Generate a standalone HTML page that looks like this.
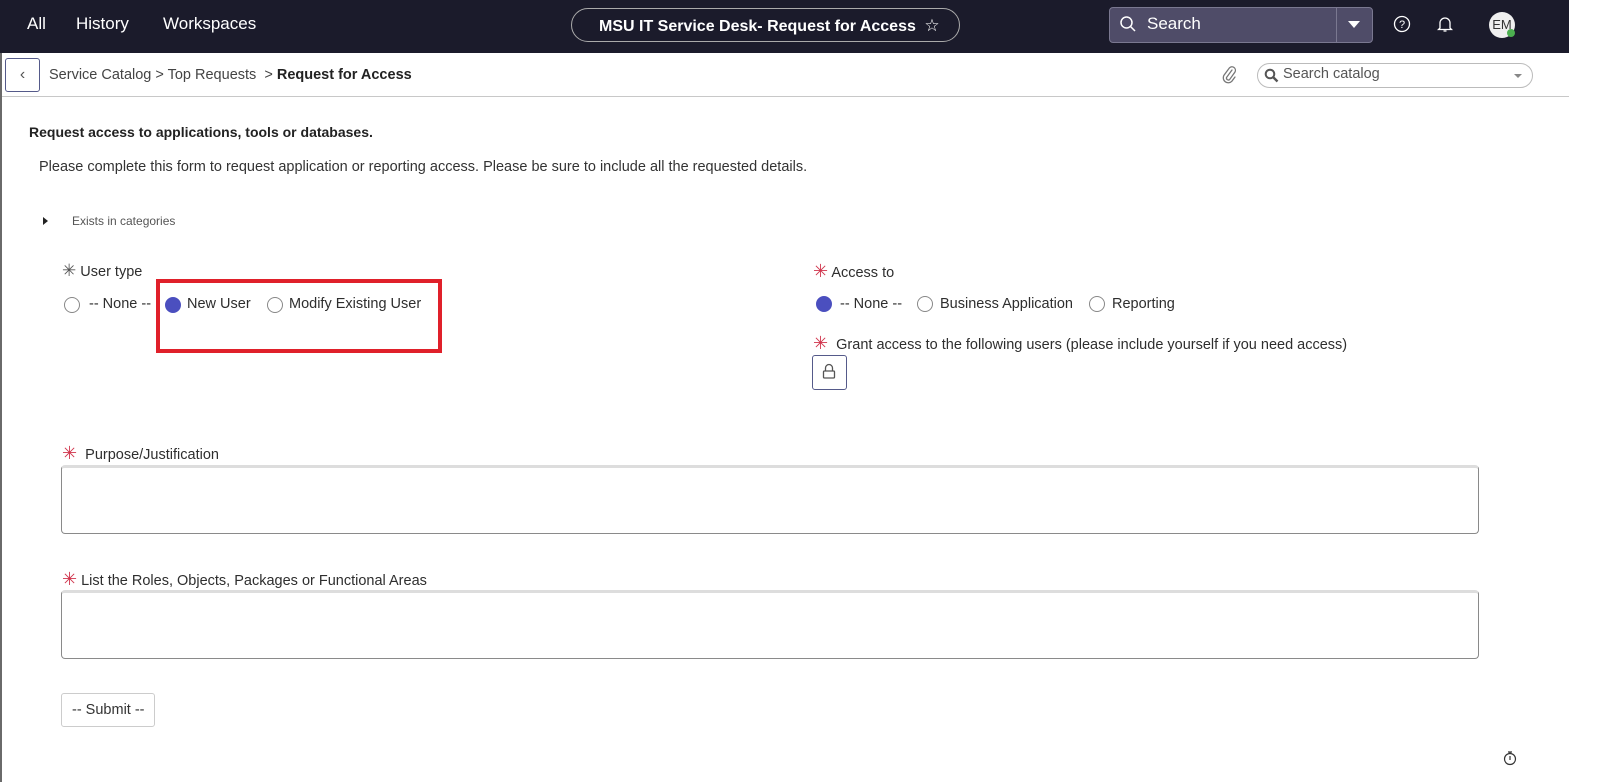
<!DOCTYPE html>
<html><head><meta charset="utf-8"><style>
*{box-sizing:border-box;margin:0;padding:0}
body{width:1600px;height:782px;background:#fff;font-family:"Liberation Sans",sans-serif;color:#2e2e2e;position:relative;overflow:hidden}
.a{position:absolute;white-space:nowrap}
.top{position:absolute;left:0;top:0;width:1569px;height:53px;background:#1b1b2b}
.nav{color:#fff;font-size:17px;top:14px}
.radio{position:absolute;width:16px;height:16px;border:1px solid #888;border-radius:50%;background:#fff}
.radio.on{background:#4b4fbf;border-color:#4b4fbf}
.lbl{font-size:14.5px;color:#2e2e2e}
.star{color:#d0344c;font-size:18px}
.ta{position:absolute;left:61px;width:1418px;border:1px solid #8a8a8a;border-radius:4px;border-top:3px solid #ddd}
</style></head><body>
<div style="position:absolute;left:0;top:0;width:2px;height:782px;background:#6a6a6a"></div>
<div class="top"></div>
<div class="a nav" style="left:27px">All</div>
<div class="a nav" style="left:76px">History</div>
<div class="a nav" style="left:163px">Workspaces</div>
<div class="a" style="left:571px;top:8px;width:389px;height:34px;border:1px solid #aaa;border-radius:17px;color:#fff;font-weight:bold;font-size:16px;padding:7px 0 0 27px">MSU IT Service Desk- Request for Access <span style="font-weight:normal;font-size:17px;margin-left:4px">☆</span></div>
<div class="a" style="left:1109px;top:7px;width:264px;height:36px;background:#4f4c68;border:1px solid #7a7890;border-radius:4px"></div>
<div class="a" style="left:1336px;top:7px;width:1px;height:36px;background:#7a7890"></div>
<svg class="a" style="left:1119px;top:15px" width="18" height="18" viewBox="0 0 18 18"><circle cx="7.5" cy="7.5" r="5.5" fill="none" stroke="#fff" stroke-width="1.5"/><path d="M11.5 11.5L16 16" stroke="#fff" stroke-width="1.5"/></svg>
<div class="a" style="left:1147px;top:14px;color:#fff;font-size:17px">Search</div>
<div class="a" style="left:1348px;top:21px;width:0;height:0;border-left:6px solid transparent;border-right:6px solid transparent;border-top:7px solid #fff"></div>
<svg class="a" style="left:1393px;top:15px" width="18" height="18"><circle cx="9" cy="9" r="7.5" fill="none" stroke="#fff" stroke-width="1.3"/><text x="9" y="13" font-size="11" fill="#fff" text-anchor="middle" font-family="Liberation Sans">?</text></svg>
<svg class="a" style="left:1437px;top:15px" width="16" height="18"><path d="M3 13V8a5 5 0 0110 0v5l1.5 1.5h-13z M6.5 16h3" fill="none" stroke="#fff" stroke-width="1.3"/></svg>
<div class="a" style="left:1489px;top:12px;width:26px;height:26px;border-radius:50%;background:#f0f0f0;color:#333;font-size:13px;text-align:center;line-height:26px">EM</div>
<div class="a" style="left:1507px;top:29px;width:8px;height:8px;border-radius:50%;background:#4caf50"></div>
<div class="a" style="left:5px;top:58px;width:35px;height:34px;border:1px solid #555a8a;border-radius:3px;color:#555;text-align:center;font-size:16px;line-height:32px">‹</div>
<div class="a" style="left:49px;top:67px;font-size:14.5px;color:#444">Service Catalog &gt; Top Requests &nbsp;&gt; <b style="color:#222">Request for Access</b></div>
<svg class="a" style="left:1221px;top:64px" width="16" height="20" viewBox="0 0 16 20"><path d="M11 6L5.5 13.5a2 2 0 003 2.2L14 8a3.5 3.5 0 00-5.5-4.2L2.8 11.5a5 5 0 008 5.8L14 13" fill="none" stroke="#777" stroke-width="1.3" stroke-linecap="round"/></svg>
<div class="a" style="left:1257px;top:63px;width:276px;height:25px;border:1px solid #bbb;border-radius:13px"></div>
<svg class="a" style="left:1264px;top:68px" width="15" height="15"><circle cx="6" cy="6" r="4.3" fill="none" stroke="#555" stroke-width="2"/><path d="M9 9l4.5 4.5" stroke="#555" stroke-width="2.4"/></svg>
<div class="a" style="left:1283px;top:66px;font-size:14.5px;color:#555">Search catalog</div>
<div class="a" style="left:1514px;top:74px;border-left:4px solid transparent;border-right:4px solid transparent;border-top:4px solid #888"></div>
<div class="a" style="left:2px;top:96px;width:1567px;height:1px;background:#c8c8c8"></div>
<div class="a" style="left:29px;top:124px;font-size:14px;font-weight:bold;color:#222">Request access to applications, tools or databases.</div>
<div class="a" style="left:39px;top:159px;font-size:14.5px;color:#333">Please complete this form to request application or reporting access. Please be sure to include all the requested details.</div>
<div class="a" style="left:43px;top:217px;border-top:4px solid transparent;border-bottom:4px solid transparent;border-left:5px solid #222"></div>
<div class="a" style="left:72px;top:214px;font-size:12px;color:#555">Exists in categories</div>
<div class="a lbl" style="left:62px;top:261px"><span style="color:#555;font-size:17px">✳</span> User type</div>
<div class="radio" style="left:64px;top:297px"></div><div class="a lbl" style="left:89px;top:296px">-- None --</div>
<div class="radio on" style="left:165px;top:297px"></div><div class="a lbl" style="left:187px;top:296px">New User</div>
<div class="radio" style="left:267px;top:297px"></div><div class="a lbl" style="left:289px;top:296px">Modify Existing User</div>
<div class="a" style="left:156px;top:279px;width:286px;height:74px;border:4px solid #e0202a"></div>
<div class="a lbl" style="left:813px;top:261px"><span class="star">✳</span> Access to</div>
<div class="radio on" style="left:816px;top:296px"></div><div class="a lbl" style="left:840px;top:296px">-- None --</div>
<div class="radio" style="left:917px;top:296px"></div><div class="a lbl" style="left:940px;top:296px">Business Application</div>
<div class="radio" style="left:1089px;top:296px"></div><div class="a lbl" style="left:1112px;top:296px">Reporting</div>
<div class="a lbl" style="left:813px;top:333px"><span class="star">✳</span>&nbsp; Grant access to the following users (please include yourself if you need access)</div>
<div class="a" style="left:812px;top:355px;width:35px;height:35px;border:1px solid #555a8a;border-radius:3px"></div>
<svg class="a" style="left:822px;top:363px" width="14" height="17"><path d="M3.5 8V5a3.5 3.5 0 017 0v3" fill="none" stroke="#555" stroke-width="1.3"/><rect x="1.5" y="8" width="11" height="7" rx="1" fill="none" stroke="#555" stroke-width="1.3"/></svg>
<div class="a lbl" style="left:62px;top:443px"><span class="star">✳</span>&nbsp; Purpose/Justification</div>
<div class="ta" style="top:465px;height:69px"></div>
<div class="a lbl" style="left:62px;top:569px"><span class="star">✳</span> List the Roles, Objects, Packages or Functional Areas</div>
<div class="ta" style="top:590px;height:69px"></div>
<div class="a" style="left:61px;top:693px;width:94px;height:34px;border:1px solid #ccc;border-radius:3px;font-size:14.5px;color:#333;padding:8px 0 0 10px">-- Submit --</div>
<svg class="a" style="left:1503px;top:750px" width="14" height="16"><circle cx="7" cy="9" r="5.5" fill="none" stroke="#333" stroke-width="1.2"/><path d="M5 2h4M7 2v2M7 6v4" stroke="#333" stroke-width="1.2"/></svg>
</body></html>
